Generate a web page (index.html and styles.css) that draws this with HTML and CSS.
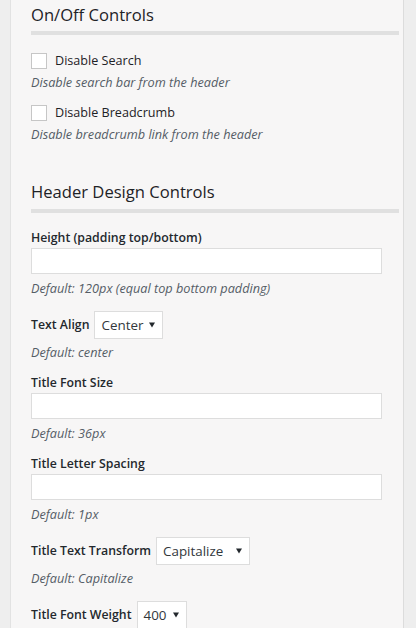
FILE: index.html
```html
<!DOCTYPE html>
<html>
<head>
<meta charset="utf-8">
<link rel="stylesheet" href="styles.css">
</head>
<body>
<div class="panel">
  <h3 class="section-title first">On/Off Controls</h3>

  <div class="check-row first-check">
    <span class="checkbox"></span>
    <span class="check-label">Disable Search</span>
  </div>
  <div class="desc desc-check">Disable search bar from the header</div>

  <div class="check-row">
    <span class="checkbox"></span>
    <span class="check-label">Disable Breadcrumb</span>
  </div>
  <div class="desc desc-check">Disable breadcrumb link from the header</div>

  <h3 class="section-title second">Header Design Controls</h3>

  <div class="control text-control first-control">
    <div class="label">Height (padding top/bottom)</div>
    <div class="input"></div>
    <div class="desc desc-input">Default: 120px (equal top bottom padding)</div>
  </div>

  <div class="control select-control">
    <div class="select-row">
      <span class="label inline">Text Align</span>
      <span class="select w-align"><span class="sel-text">Center</span><svg class="arrow" width="6" height="6" viewBox="0 0 6 6"><path d="M0 0.5H6L3 5.5Z" fill="#23282d"/></svg></span>
    </div>
    <div class="desc desc-select">Default: center</div>
  </div>

  <div class="control text-control">
    <div class="label">Title Font Size</div>
    <div class="input"></div>
    <div class="desc desc-input">Default: 36px</div>
  </div>

  <div class="control text-control">
    <div class="label">Title Letter Spacing</div>
    <div class="input"></div>
    <div class="desc desc-input">Default: 1px</div>
  </div>

  <div class="control select-control">
    <div class="select-row">
      <span class="label inline">Title Text Transform</span>
      <span class="select w-transform"><span class="sel-text">Capitalize</span><svg class="arrow" width="6" height="6" viewBox="0 0 6 6"><path d="M0 0.5H6L3 5.5Z" fill="#23282d"/></svg></span>
    </div>
    <div class="desc desc-select">Default: Capitalize</div>
  </div>

  <div class="control select-control">
    <div class="select-row">
      <span class="label inline">Title Font Weight</span>
      <span class="select w-weight"><span class="sel-text">400</span><svg class="arrow" width="6" height="6" viewBox="0 0 6 6"><path d="M0 0.5H6L3 5.5Z" fill="#23282d"/></svg></span>
    </div>
  </div>
</div>
</body>
</html>
```

FILE: styles.css
```css
html, body {
  margin: 0;
  padding: 0;
  height: 100%;
  background: #eeeeee;
  overflow: hidden;
}

body {
  font-family: "Open Sans", "Noto Sans", sans-serif;
  color: #23282d;
}

.panel {
  margin: 0 12px 0 10px;
  min-height: 100%;
  box-sizing: border-box;
  background: #f7f6f6;
  border-left: 1px solid #e2e2e2;
  border-right: 1px solid #dcdcdc;
  padding: 0 4px 0 20px;
}

.section-title {
  margin: 0;
  font-size: 16.6px;
  font-weight: 400;
  line-height: 30px;
  color: #1e2226;
  border-bottom: 4px solid #e0e0e0;
}

.section-title.first {
  padding-bottom: 1px;
}

.section-title.second {
  margin-top: 33px;
  padding-bottom: 2px;
}

.check-row {
  display: flex;
  align-items: center;
  height: 20px;
  margin-top: 11px;
}

.check-row.first-check {
  margin-top: 16px;
}

.checkbox {
  width: 16px;
  height: 16px;
  box-sizing: border-box;
  border: 1px solid #c6c6c6;
  background: #ffffff;
  margin-right: 8px;
  flex: none;
}

.check-label {
  font-size: 12.6px;
  font-weight: 400;
  line-height: 20px;
  color: #1e2226;
}

.desc {
  font-size: 12.7px;
  font-style: italic;
  line-height: 20px;
  color: #555d66;
}

.desc-check {
  margin-top: 1px;
}

.control {
  margin-top: 11px;
}

.control.first-control {
  margin-top: 15px;
}

.control.select-control {
  margin-top: 13px;
}

.label {
  font-size: 12.3px;
  font-weight: 600;
  line-height: 20px;
  color: #23282d;
}

.input {
  width: 351px;
  height: 26px;
  box-sizing: border-box;
  border: 1px solid #dddddd;
  background: #ffffff;
}

.desc-input {
  margin-top: 4px;
}

.desc-select {
  margin-top: 3px;
}

.select-row {
  display: flex;
  align-items: center;
  height: 28px;
}

.label.inline {
  margin-right: 5px;
}

.select {
  display: flex;
  align-items: center;
  justify-content: space-between;
  height: 28px;
  box-sizing: border-box;
  border: 1px solid #dddddd;
  background: #ffffff;
  padding: 0 7px 0 6px;
  font-size: 13.4px;
  color: #32373c;
}

.sel-text {
  line-height: 26px;
}

.arrow {
  display: block;
  flex: none;
}

.w-align { width: 69px; }
.w-transform { width: 94px; }
.w-weight { width: 50px; }
```
